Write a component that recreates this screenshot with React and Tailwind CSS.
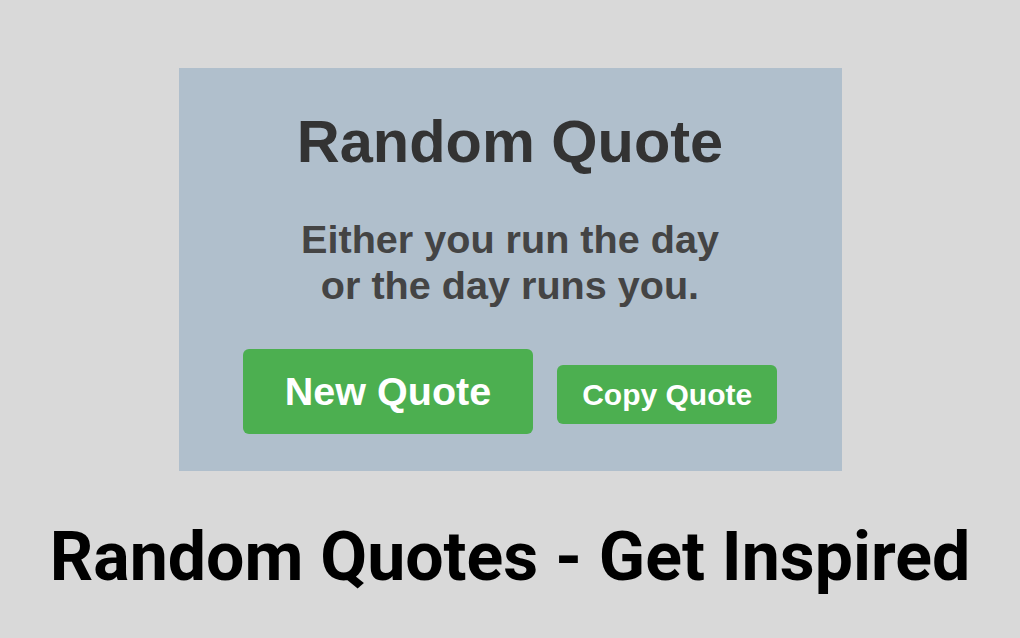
export default function App() {
  return (
    <div className="flex h-[638px] w-full flex-col items-center bg-[#d9d9d9] pt-[68px]">
      {/* quote card */}
      <div className="flex h-[403px] w-[663px] flex-col items-center bg-[#b0bfcc] pt-[40px] font-['Liberation_Sans',Arial,sans-serif]">
        <h1 className="text-[59.5px] font-bold leading-[1.15] text-[#333]">Random Quote</h1>
        <p className="mt-[40px] text-center text-[39.6px] font-bold leading-[46px] text-[#444]">
          Either you run the day
          <br />
          or the day runs you.
        </p>
        <div className="mt-[41px] flex items-baseline gap-[24px]">
          <button className="h-[85px] rounded-[6px] bg-[#4caf50] px-[42px] text-[39.5px] font-bold text-white">
            New Quote
          </button>
          <button className="h-[59px] rounded-[6px] bg-[#4caf50] px-[25px] text-[30px] font-bold text-white">
            Copy Quote
          </button>
        </div>
      </div>
      <h2 className="mt-[52px] font-['Roboto',sans-serif] text-[68px] font-bold leading-none text-black">
        Random Quotes - Get Inspired
      </h2>
    </div>
  );
}
